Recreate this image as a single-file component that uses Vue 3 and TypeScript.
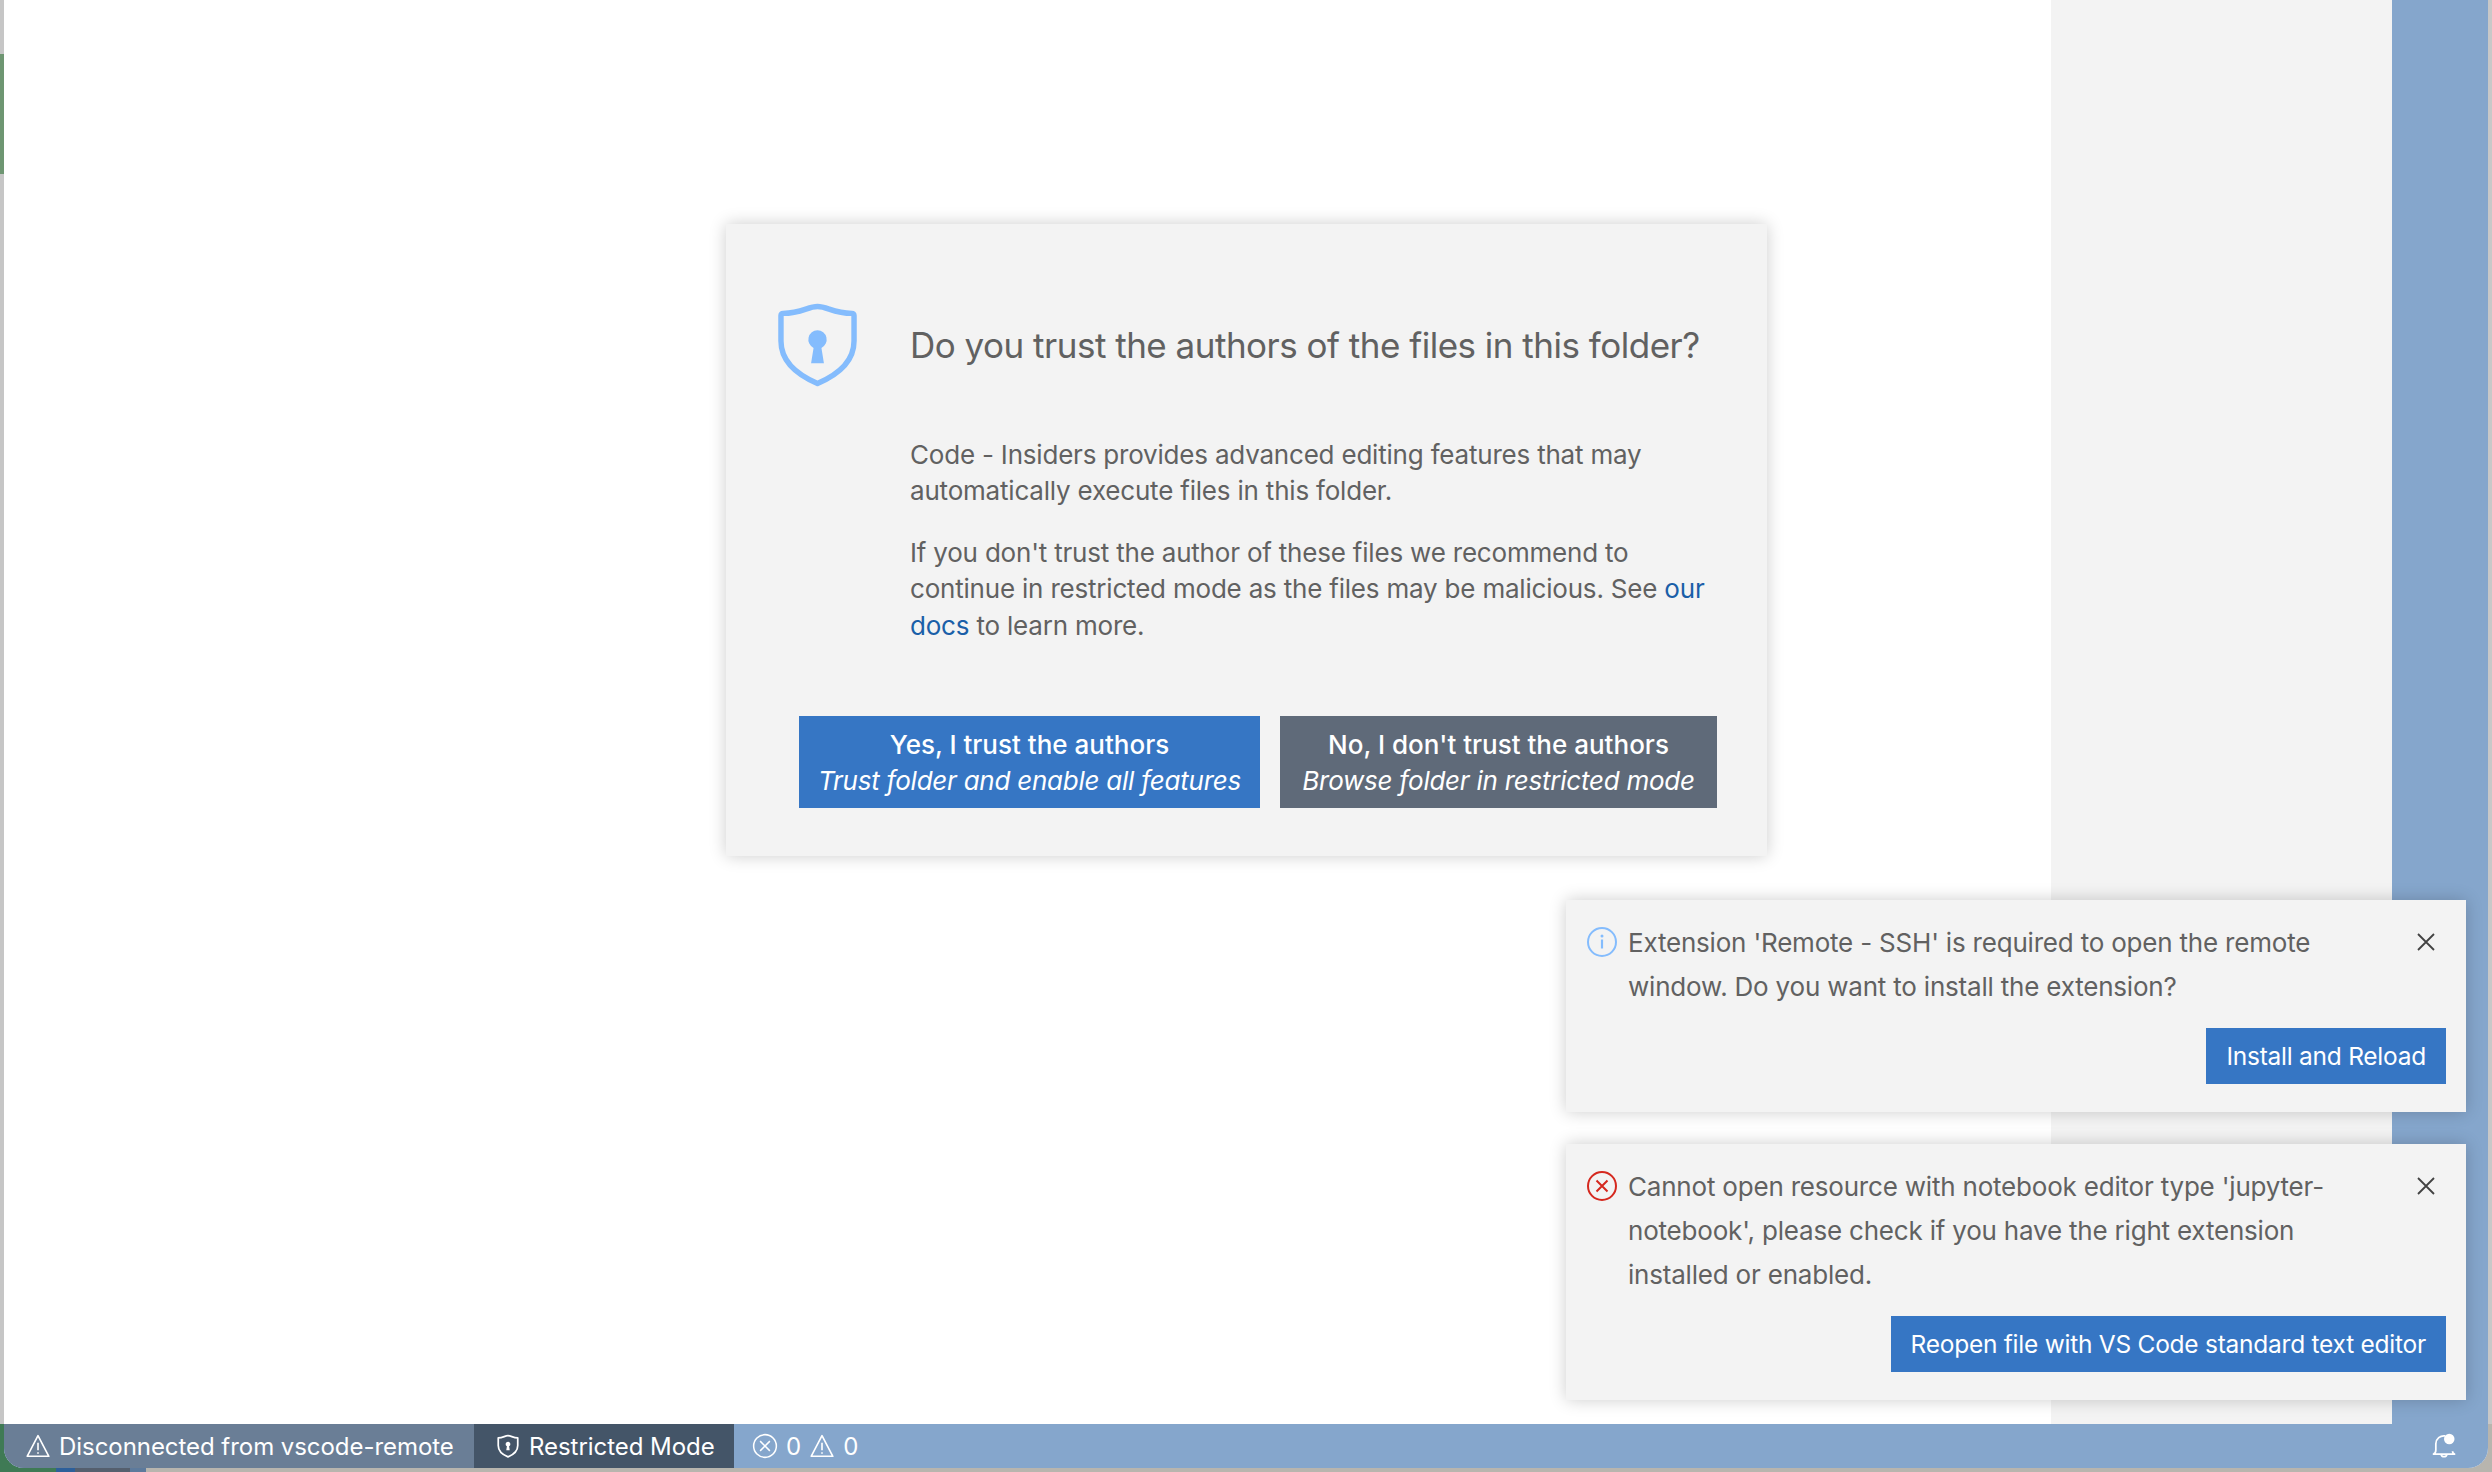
<script setup lang="ts">
interface Notice {
  kind: 'info' | 'error'
  lines: string[]
  action: string
}
const notices: Notice[] = [
  {
    kind: 'info',
    lines: ["Extension 'Remote - SSH' is required to open the remote", 'window. Do you want to install the extension?'],
    action: 'Install and Reload',
  },
  {
    kind: 'error',
    lines: ["Cannot open resource with notebook editor type 'jupyter-", "notebook', please check if you have the right extension", 'installed or enabled.'],
    action: 'Reopen file with VS Code standard text editor',
  },
]
</script>

<template>
  <div class="desktop">
    <div class="edge">
      <div class="edge-green"></div>
    </div>
    <div class="window">
      <div class="workbench">
        <div class="editor">
          <div class="dialog">
            <div class="dialog-head">
              <svg class="shield" viewBox="0 0 80 84" fill="none">
                <path d="M40 3C30 3 24 10 5 10a2 2 0 0 0-2 2v26c0 20 16 34 37 43 21-9 37-23 37-43V12a2 2 0 0 0-2-2C56 10 50 3 40 3Z" stroke="#84bcfd" stroke-width="5.5" stroke-linejoin="round" />
                <path d="M40 27a9.500 9.500 0 0 1 4 18l2.500 15.500h-13L36 45a9.500 9.500 0 0 1 4-18Z" fill="#84bcfd" />
              </svg>
              <h1 class="title">Do you trust the authors of the files in this folder?</h1>
            </div>
            <div class="dialog-body">
              <p>Code - Insiders provides advanced editing features that may<br />automatically execute files in this folder.</p>
              <p>If you don't trust the author of these files we recommend to<br />continue in restricted mode as the files may be malicious. See <a class="link">our<br />docs</a> to learn more.</p>
            </div>
            <div class="dialog-actions">
              <button class="btn btn-primary"><strong>Yes, I trust the authors</strong><em>Trust folder and enable all features</em></button>
              <button class="btn btn-secondary"><strong>No, I don't trust the authors</strong><em>Browse folder in restricted mode</em></button>
            </div>
          </div>
        </div>
        <div class="side-panel"></div>
        <div class="activity"></div>
      </div>
      <footer class="status">
        <div class="status-item remote">
          <svg class="s-icon" viewBox="0 0 24 24" fill="none" stroke="#fff" stroke-width="1.500" stroke-linejoin="round"><path d="M12 2.500 22 21.500H2Z" /><path d="M12 9v7M12 17.800v1.400" /></svg>
          <span>Disconnected from vscode-remote</span>
        </div>
        <div class="status-item restricted">
          <svg class="s-icon" viewBox="0 0 24 24" fill="none"><path d="M12 2.500c-3 0-4.500 2-9 2v7c0 5 4 8.500 9 10.500 5-2 9-5.500 9-10.500v-7c-4.500 0-6-2-9-2Z" stroke="#fff" stroke-width="1.600" stroke-linejoin="round" /><path d="M12 8a2.300 2.300 0 0 1 1 4.300l.6 3.700h-3.200l.6-3.700A2.300 2.300 0 0 1 12 8Z" fill="#fff" /></svg>
          <span>Restricted Mode</span>
        </div>
        <div class="status-item problems">
          <svg class="s-icon" viewBox="0 0 24 24" fill="none" stroke="#fff" stroke-width="1.400"><circle cx="12" cy="12" r="10.500" /><path d="m7.500 7.500 9 9M16.500 7.500l-9 9" /></svg>
          <span>0</span>
          <svg class="s-icon" viewBox="0 0 24 24" fill="none" stroke="#fff" stroke-width="1.500" stroke-linejoin="round"><path d="M12 2.500 22 21.500H2Z" /><path d="M12 9v7M12 17.800v1.400" /></svg>
          <span>0</span>
        </div>
        <div class="status-spacer"></div>
        <svg class="bell" viewBox="0 0 24 24" fill="none" stroke="#fff" stroke-width="1.500" stroke-linejoin="round">
          <path d="M13 3.300A7 7 0 0 0 5 10v5.500c0 1.500-.8 3-2 3.500h18c-.9-.4-1.600-1.300-1.800-2.500" />
          <path d="M9.500 19.200a2.600 2.600 0 0 0 5 0" />
          <circle cx="16.500" cy="6" r="4.500" fill="#fff" stroke="none" />
        </svg>
      </footer>
    </div>

    <div class="toasts">
      <section v-for="n in notices" :key="n.action" class="toast">
        <div class="toast-main">
          <svg v-if="n.kind === 'info'" class="toast-icon" viewBox="0 0 32 32" fill="none">
            <circle cx="16" cy="16" r="14" stroke="#84bcfd" stroke-width="2" />
            <path d="M16 13.500v9" stroke="#84bcfd" stroke-width="2.200" />
            <circle cx="16" cy="10" r="1.500" fill="#84bcfd" />
          </svg>
          <svg v-else class="toast-icon" viewBox="0 0 32 32" fill="none">
            <circle cx="16" cy="16" r="14" stroke="#d5281e" stroke-width="2" />
            <path d="m10.500 10.500 11 11M21.500 10.500l-11 11" stroke="#d5281e" stroke-width="2" />
          </svg>
          <div class="toast-text">
            <div v-for="l in n.lines" :key="l">{{ l }}</div>
          </div>
          <svg class="toast-close" viewBox="0 0 20 20" fill="none" stroke="#424242" stroke-width="1.800"><path d="m2 2 16 16M18 2 2 18" /></svg>
        </div>
        <div class="toast-actions">
          <button class="toast-btn">{{ n.action }}</button>
        </div>
      </section>
    </div>
  </div>
</template>

<style scoped>
.desktop {
  position: relative;
  width: 2492px;
  height: 1472px;
  display: flex;
  overflow: hidden;
  background:
    linear-gradient(to right, #3f7a55 0 56px, #2d5f9a 56px 75px, #555f6e 75px 130px, #5d7a9c 130px 146px, #b8b5ae 146px) left bottom / 100% 48px no-repeat,
    #c8c8c8;
  font-family: Inter, "Liberation Sans", sans-serif;
}
.edge {
  width: 4px;
  height: 1424px;
  flex: none;
  padding-top: 54px;
  box-sizing: border-box;
  background: #c6c6c6;
}
.edge-green {
  height: 120px;
  background: #6e9672;
}
.window {
  flex: none;
  width: 2484px;
  height: 1468px;
  display: flex;
  flex-direction: column;
  border-radius: 0 0 20px 20px;
  overflow: hidden;
  background: #fff;
}
.workbench {
  flex: 1;
  display: flex;
  min-height: 0;
}
.editor {
  flex: 1;
  position: relative;
  background: #fff;
}
.side-panel {
  width: 341px;
  background: #f3f3f3;
}
.activity {
  width: 96px;
  background: #85a6cc;
}
.dialog {
  position: absolute;
  left: 722px;
  top: 224px;
  width: 1041px;
  height: 632px;
  box-sizing: border-box;
  padding: 79px 50px 0 52px;
  background: #f3f3f3;
  box-shadow: 0 0 16px rgba(0, 0, 0, 0.2);
  color: #616161;
  display: flex;
  flex-direction: column;
}
.dialog-head {
  display: flex;
  align-items: center;
  gap: 53px;
}
.shield {
  width: 79px;
  height: 84px;
  flex: none;
}
.title {
  margin: 0;
  font-size: 35px;
  font-weight: 400;
  letter-spacing: -0.5px;
  line-height: 84px;
  white-space: nowrap;
}
.dialog-body {
  padding: 50px 0 0 132px;
  font-size: 26px;
  letter-spacing: -0.2px;
  line-height: 36.400px;
}
.dialog-body p {
  margin: 0 0 25px;
  white-space: nowrap;
}
.link {
  color: #1a5fa8;
}
.dialog-actions {
  display: flex;
  justify-content: flex-end;
  gap: 20px;
  margin-top: 47px;
}
.btn {
  height: 92px;
  border: 0;
  padding: 2px 0 0;
  color: #fff;
  font: inherit;
  font-size: 26px;
  line-height: 36px;
  white-space: nowrap;
  display: flex;
  flex-direction: column;
  align-items: center;
  justify-content: center;
}
.btn strong {
  font-weight: 500;
}
.btn em {
  letter-spacing: -0.25px;
}
.btn-primary {
  background: #3676c4;
  width: 461px;
}
.btn-secondary {
  background: #5f6a79;
  width: 437px;
}
.status {
  height: 44px;
  flex: none;
  display: flex;
  align-items: stretch;
  background: #85a6cc;
  color: #fff;
  font-size: 24px;
}
.status-item {
  display: flex;
  align-items: center;
  white-space: nowrap;
}
.remote {
  width: 470px;
  box-sizing: border-box;
  padding-left: 21px;
  gap: 8px;
  letter-spacing: -0.05px;
  background: #6a7e96;
}
.restricted {
  width: 260px;
  box-sizing: border-box;
  padding-left: 21px;
  gap: 8px;
  letter-spacing: -0.05px;
  background: #445568;
}
.problems {
  padding-left: 18px;
  gap: 8px;
}
.s-icon {
  width: 26px;
  height: 26px;
  flex: none;
}
.status-spacer {
  flex: 1;
}
.bell {
  width: 28px;
  height: 28px;
  align-self: center;
  margin-right: 30px;
}
.toasts {
  position: absolute;
  left: 1566px;
  top: 900px;
  width: 900px;
  display: flex;
  flex-direction: column;
  gap: 32px;
}
.toast {
  background: #f3f3f3;
  box-shadow: 0 0 16px rgba(0, 0, 0, 0.2);
  color: #616161;
  font-size: 26px;
  line-height: 44px;
  padding: 20px 20px 28px 20px;
}
.toast-main {
  display: flex;
  align-items: flex-start;
}
.toast-icon {
  width: 32px;
  height: 32px;
  flex: none;
  margin: 6px 10px 0 0;
}
.toast-text {
  flex: 1;
  white-space: nowrap;
  letter-spacing: -0.2px;
  margin-top: 1px;
}
.toast-close {
  width: 20px;
  height: 20px;
  margin: 12px 10px 0 0;
  flex: none;
}
.toast-actions {
  display: flex;
  justify-content: flex-end;
  margin-top: 19px;
}
.toast-btn {
  height: 56px;
  border: 0;
  padding: 0 20px;
  background: #3676c4;
  color: #fff;
  font: inherit;
  font-size: 24.500px;
  letter-spacing: -0.25px;
}
</style>

<style>
html, body { margin: 0; background: #c8c8c8; }
</style>
